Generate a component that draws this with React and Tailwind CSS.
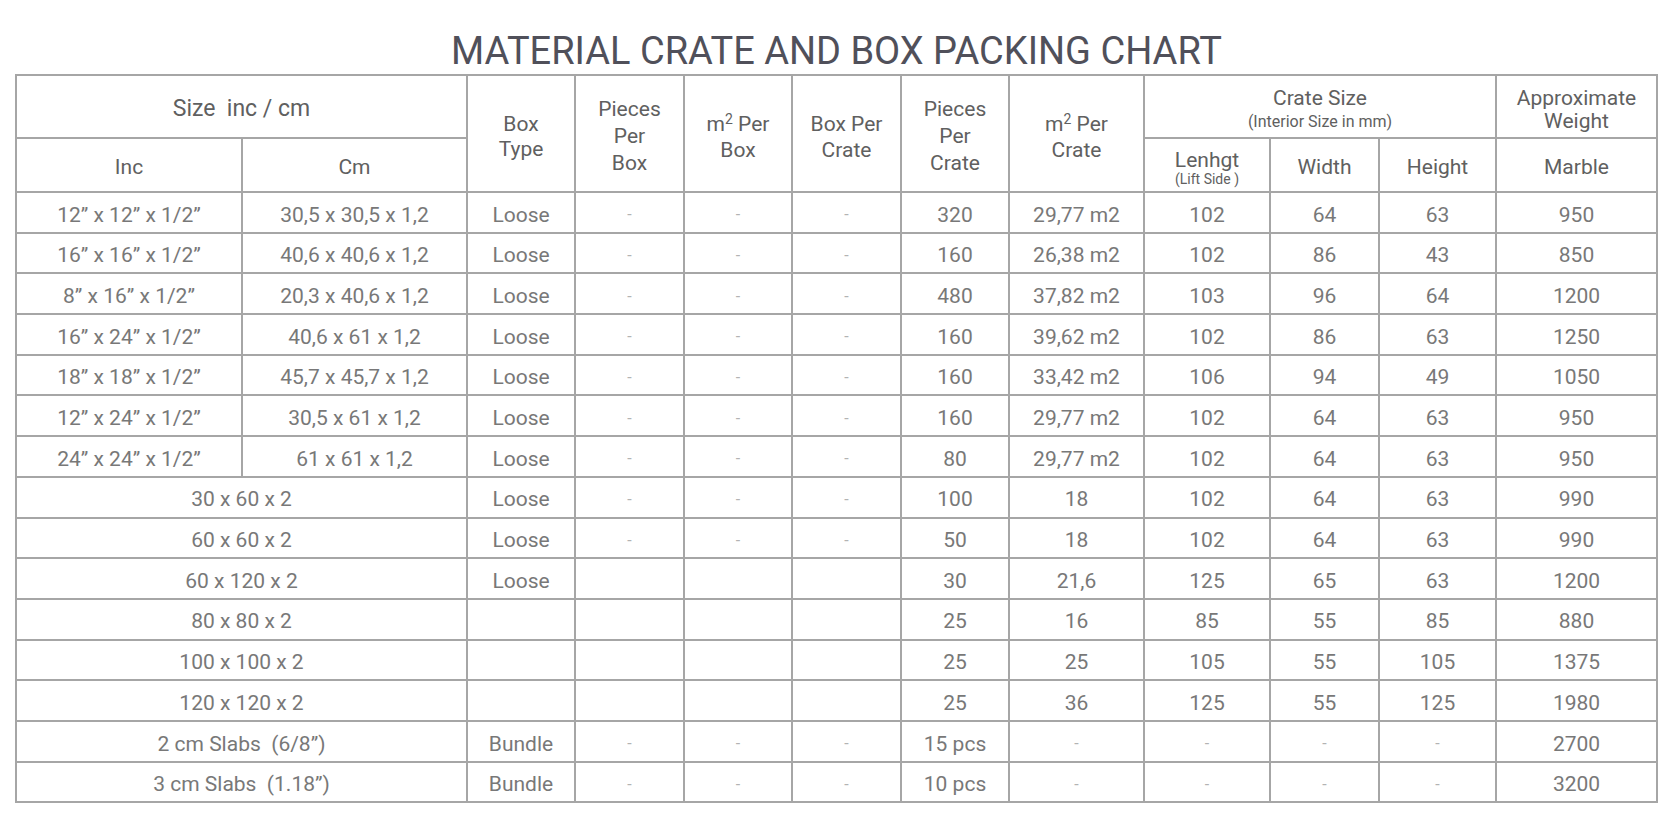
const rows = [
  ["12” x 12” x 1/2”", "30,5 x 30,5 x 1,2", "Loose", "-", "-", "-", "320", "29,77 m2", "102", "64", "63", "950"],
  ["16” x 16” x 1/2”", "40,6 x 40,6 x 1,2", "Loose", "-", "-", "-", "160", "26,38 m2", "102", "86", "43", "850"],
  ["8” x 16” x 1/2”", "20,3 x 40,6 x 1,2", "Loose", "-", "-", "-", "480", "37,82 m2", "103", "96", "64", "1200"],
  ["16” x 24” x 1/2”", "40,6 x 61 x 1,2", "Loose", "-", "-", "-", "160", "39,62 m2", "102", "86", "63", "1250"],
  ["18” x 18” x 1/2”", "45,7 x 45,7 x 1,2", "Loose", "-", "-", "-", "160", "33,42 m2", "106", "94", "49", "1050"],
  ["12” x 24” x 1/2”", "30,5 x 61 x 1,2", "Loose", "-", "-", "-", "160", "29,77 m2", "102", "64", "63", "950"],
  ["24” x 24” x 1/2”", "61 x 61 x 1,2", "Loose", "-", "-", "-", "80", "29,77 m2", "102", "64", "63", "950"],
  ["30 x 60 x 2", null, "Loose", "-", "-", "-", "100", "18", "102", "64", "63", "990"],
  ["60 x 60 x 2", null, "Loose", "-", "-", "-", "50", "18", "102", "64", "63", "990"],
  ["60 x 120 x 2", null, "Loose", "", "", "", "30", "21,6", "125", "65", "63", "1200"],
  ["80 x 80 x 2", null, "", "", "", "", "25", "16", "85", "55", "85", "880"],
  ["100 x 100 x 2", null, "", "", "", "", "25", "25", "105", "55", "105", "1375"],
  ["120 x 120 x 2", null, "", "", "", "", "25", "36", "125", "55", "125", "1980"],
  ["2 cm Slabs  (6/8”)", null, "Bundle", "-", "-", "-", "15 pcs", "-", "-", "-", "-", "2700"],
  ["3 cm Slabs  (1.18”)", null, "Bundle", "-", "-", "-", "10 pcs", "-", "-", "-", "-", "3200"],
]

const cols = [226, 225, 108, 109, 108, 109, 108, 135, 126, 109, 117, 161]

const th = "border-2 border-[#a6a6a6] text-center align-middle font-normal text-[#606060] p-0 pt-[6px]"
const td = "border-2 border-[#a6a6a6] text-center align-middle p-0 pt-[6px]"

function Cell({ value, span }) {
  const dash = value === "-"
  return (
    <td colSpan={span} className={td}>
      <span className={dash ? "text-[16px] text-[#b3b3b3]" : "whitespace-pre text-[21px] text-[#787878]"}>
        {value}
      </span>
    </td>
  )
}

export default function App() {
  return (
    <div
      className="min-h-screen bg-white pt-[29px]"
      style={{ fontFamily: "Roboto, 'Liberation Sans', sans-serif" }}
    >
      <div className="ml-[15px] w-[1643px]">
        <h1 className="text-center text-[38px] leading-[44px] text-[#50505a]">
          MATERIAL CRATE AND BOX PACKING CHART
        </h1>

        <table className="mt-[1px] w-[1643px] table-fixed border-collapse">
          <colgroup>
            {cols.map((w, i) => (
              <col key={i} style={{ width: w }} />
            ))}
          </colgroup>
          <thead>
            <tr className="h-[63px]">
              <th colSpan={2} className={`${th} whitespace-pre text-[23px]`}>Size  inc / cm</th>
              <th rowSpan={2} className={`${th} text-[21px] leading-[25px]`}>Box<br />Type</th>
              <th rowSpan={2} className={`${th} text-[21px] leading-[27px]`}>Pieces<br />Per<br />Box</th>
              <th rowSpan={2} className={`${th} text-[21px] leading-[26px]`}>
                m<sup className="text-[14px]">2</sup> Per<br />Box
              </th>
              <th rowSpan={2} className={`${th} text-[21px] leading-[26px]`}>Box Per<br />Crate</th>
              <th rowSpan={2} className={`${th} text-[21px] leading-[27px]`}>Pieces<br />Per<br />Crate</th>
              <th rowSpan={2} className={`${th} text-[21px] leading-[26px]`}>
                m<sup className="text-[14px]">2</sup> Per<br />Crate
              </th>
              <th colSpan={3} className={`${th} leading-[23px]`}>
                <div className="text-[21px]">Crate Size</div>
                <div className="text-[16px]">(Interior Size in mm)</div>
              </th>
              <th className={`${th} text-[21px] leading-[23px]`}>Approximate<br />Weight</th>
            </tr>
            <tr className="h-[54px]">
              <th className={`${th} text-[21px]`}>Inc</th>
              <th className={`${th} text-[21px]`}>Cm</th>
              <th className={th}>
                <div className="text-[21px] leading-[22px]">Lenhgt</div>
                <div className="text-[14px] leading-[17px]">(Lift Side )</div>
              </th>
              <th className={`${th} text-[21px]`}>Width</th>
              <th className={`${th} text-[21px]`}>Height</th>
              <th className={`${th} text-[21px]`}>Marble</th>
            </tr>
          </thead>
          <tbody>
            {rows.map((r, i) => (
              <tr key={i} className="h-[40.7px]">
                {r[1] === null ? (
                  <Cell value={r[0]} span={2} />
                ) : (
                  <>
                    <Cell value={r[0]} />
                    <Cell value={r[1]} />
                  </>
                )}
                {r.slice(2).map((v, j) => (
                  <Cell key={j} value={v} />
                ))}
              </tr>
            ))}
          </tbody>
        </table>
      </div>
    </div>
  )
}
